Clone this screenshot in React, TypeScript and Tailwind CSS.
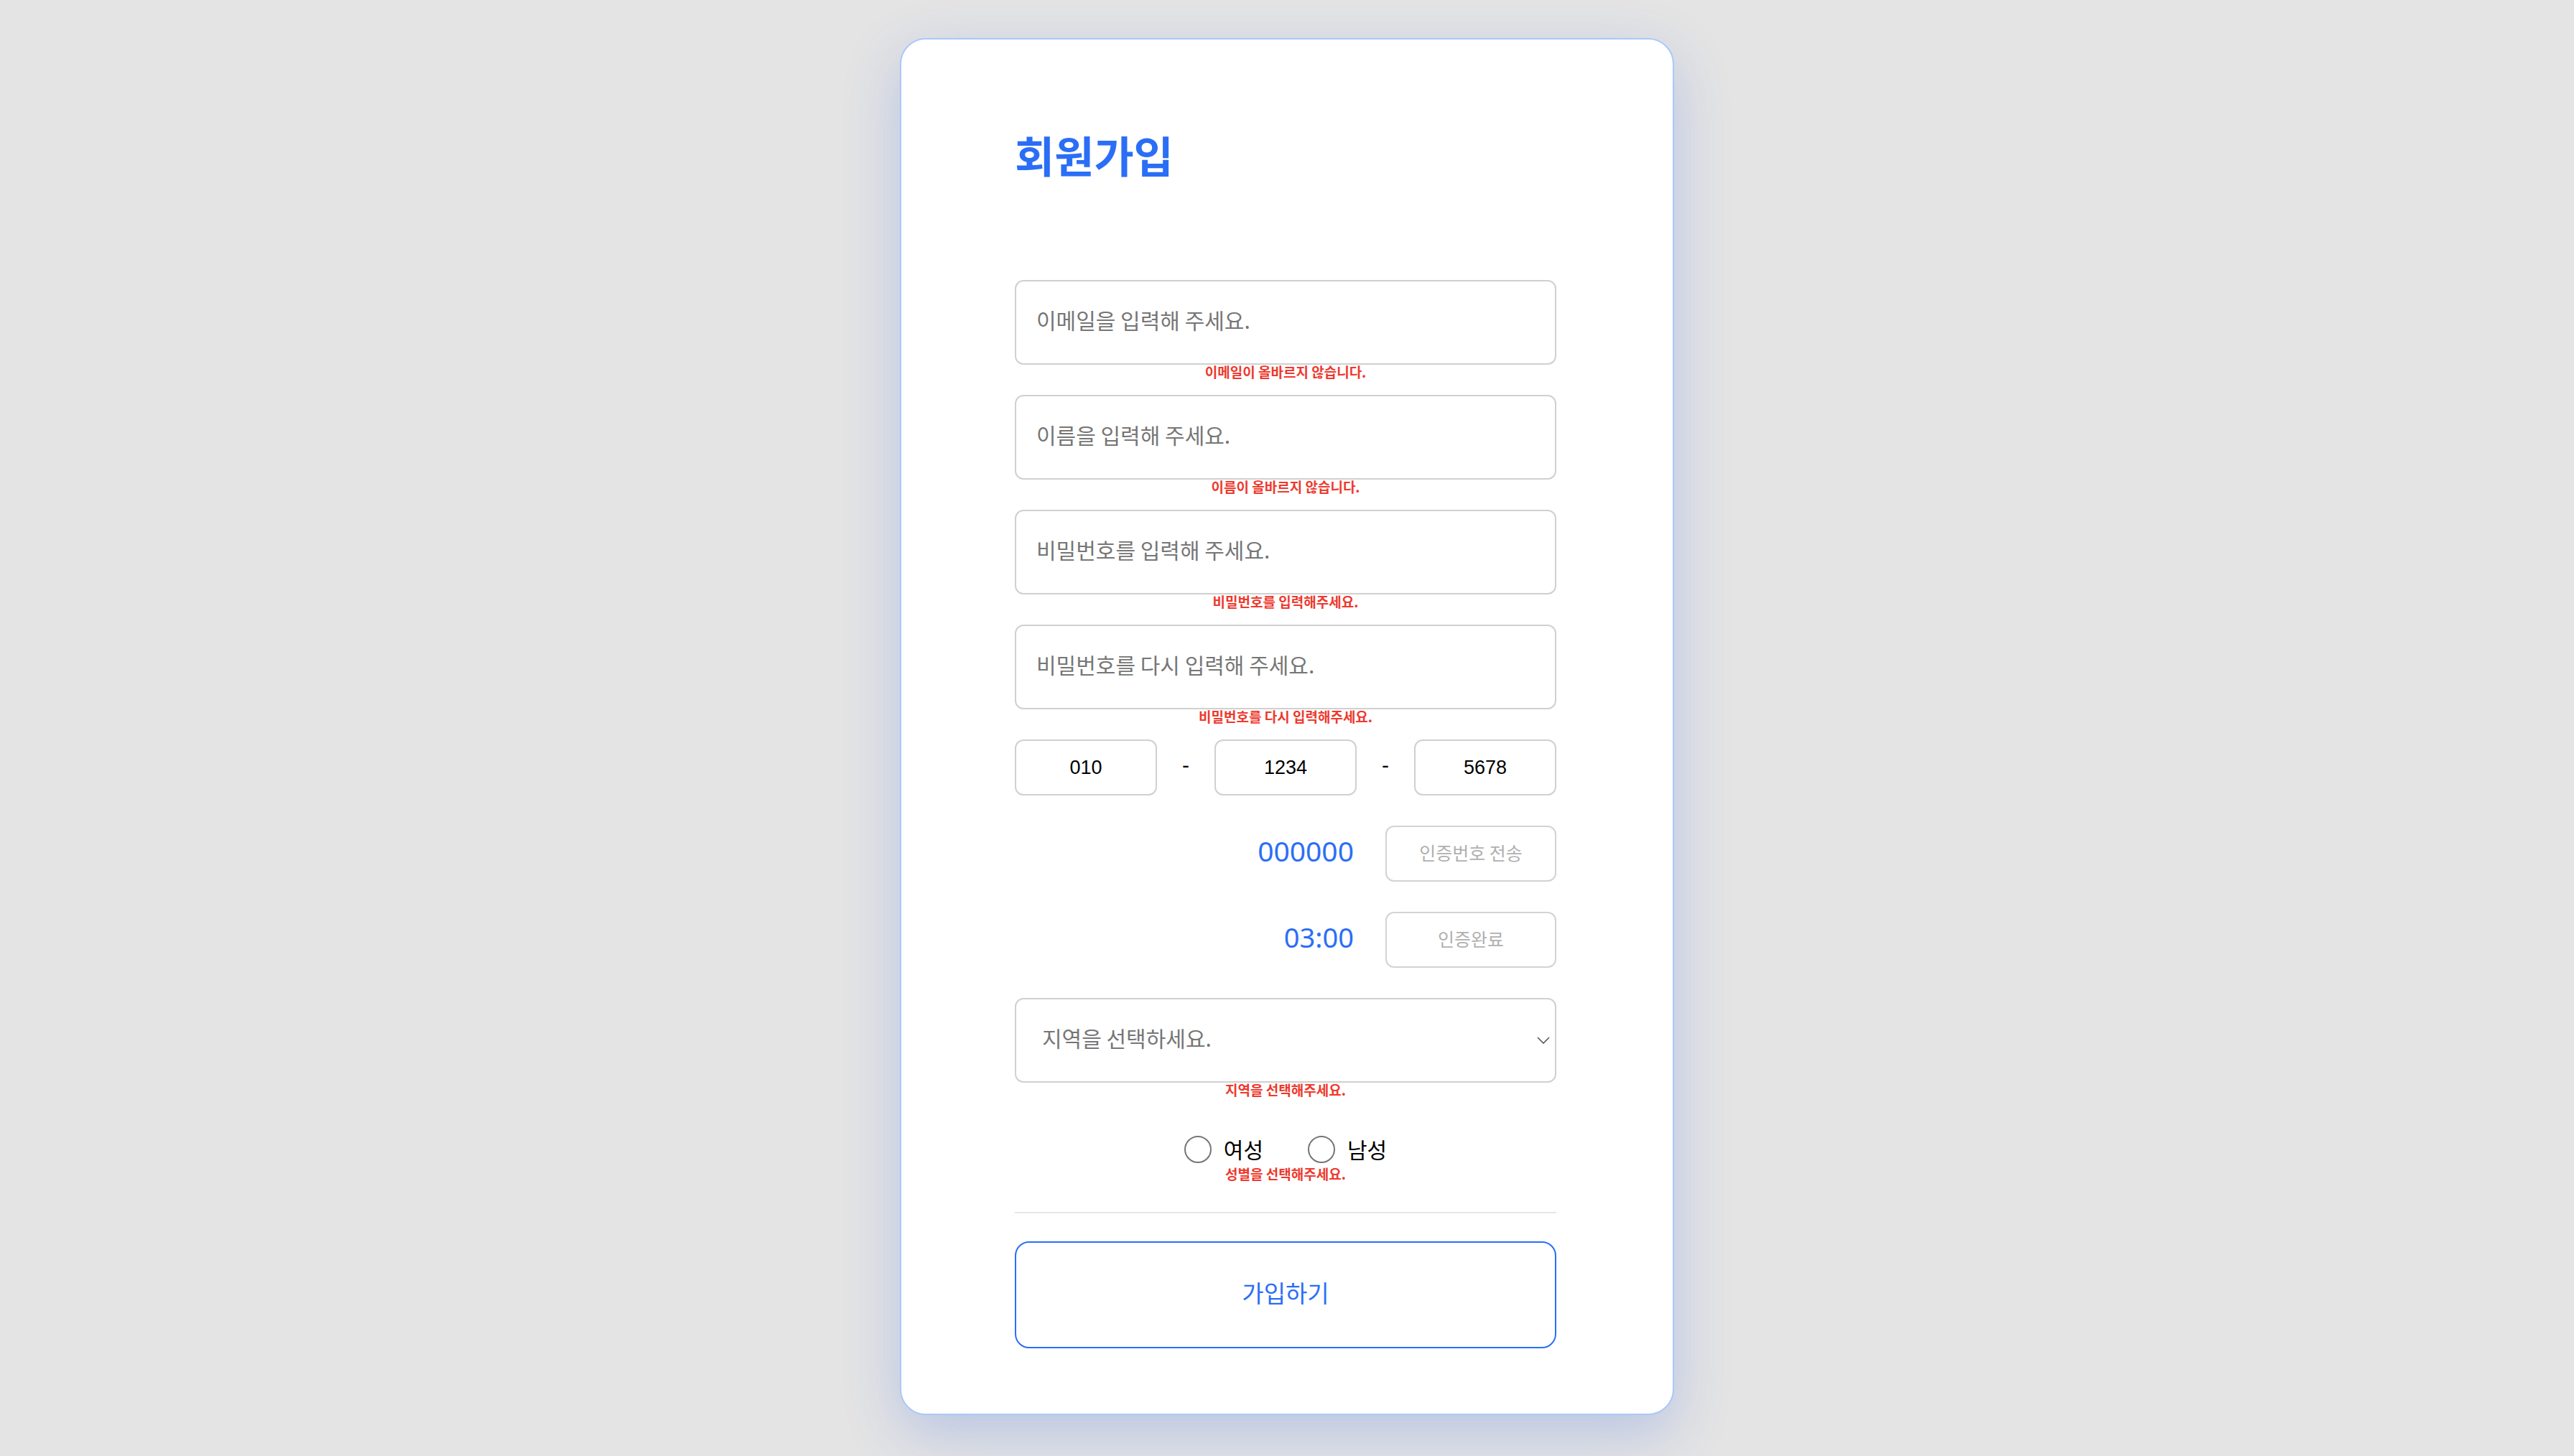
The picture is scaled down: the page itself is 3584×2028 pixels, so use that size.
import { useState } from 'react';

const KR = "font-['Noto_Sans_CJK_KR',sans-serif]";

function ErrorText({ children }: { children: string }) {
  return (
    <p className="flex h-[20px] items-center justify-center text-[19px] leading-[20px] font-bold text-[#ee392e]">
      {children}
    </p>
  );
}

function TextField({ placeholder, error, type = 'text' }: { placeholder: string; error: string; type?: string }) {
  return (
    <div>
      <input
        type={type}
        placeholder={placeholder}
        className="block h-[118px] w-full rounded-[12px] border-2 border-[#d0d0d0] bg-white pb-[8px] pl-[28px] text-[30px] text-black outline-none placeholder:text-[#767676]"
      />
      <ErrorText>{error}</ErrorText>
    </div>
  );
}

export default function App() {
  const [gender, setGender] = useState('');

  return (
    <div className={`flex min-h-screen justify-center bg-[#e4e4e4] pt-[53px] ${KR}`}>
      <div className="h-[1918px] w-[1078px] rounded-[36px] border-2 border-[#aac8fa] bg-white pt-[130px] pr-[162px] pl-[158px] shadow-[0_26px_80px_rgba(45,95,225,0.24)]">
        <h1 className="flex h-[64px] items-center pb-[4px] text-[60px] font-bold text-[#2b6ef6]">회원가입</h1>

        <div className="mt-[141px] flex flex-col gap-[22px]">
          <TextField placeholder="이메일을 입력해 주세요." error="이메일이 올바르지 않습니다." />
          <TextField placeholder="이름을 입력해 주세요." error="이름이 올바르지 않습니다." />
          <TextField type="password" placeholder="비밀번호를 입력해 주세요." error="비밀번호를 입력해주세요." />
          <TextField type="password" placeholder="비밀번호를 다시 입력해 주세요." error="비밀번호를 다시 입력해주세요." />

          {/* phone number */}
          <div className="flex h-[78px] items-center">
            {['010', '1234', '5678'].map((v, i) => (
              <div key={v} className="flex items-center">
                {i > 0 && (
                  <span className="flex w-[80px] justify-center pb-[8px] font-['Liberation_Sans',sans-serif] text-[30px] text-black">-</span>
                )}
                <input
                  defaultValue={v}
                  className="h-[78px] w-[198px] rounded-[12px] border-2 border-[#d0d0d0] bg-white text-center font-['Liberation_Sans',sans-serif] text-[27px] text-black outline-none"
                />
              </div>
            ))}
          </div>
        </div>

        <div className="mt-[42px] flex flex-col gap-[42px]">
          <div className="flex h-[78px] items-center justify-end gap-[44px]">
            <span className="mb-[8px] font-['Noto_Sans',sans-serif] text-[39px] text-[#2b6ef6]">000000</span>
            <button className="h-[78px] w-[238px] rounded-[12px] border-2 border-[#d3d3d3] bg-white pb-[3px] text-[25px] text-[#b0b0b0]">
              인증번호 전송
            </button>
          </div>
          <div className="flex h-[78px] items-center justify-end gap-[44px]">
            <span className="mb-[8px] font-['Noto_Sans',sans-serif] text-[38px] text-[#2b6ef6]">03:00</span>
            <button className="h-[78px] w-[238px] rounded-[12px] border-2 border-[#d3d3d3] bg-white pb-[3px] text-[25px] text-[#b0b0b0]">
              인증완료
            </button>
          </div>
        </div>

        <div className="mt-[42px]">
          <div className="relative">
            <select
              defaultValue=""
              className="block h-[118px] w-full appearance-none rounded-[12px] border-2 border-[#d0d0d0] bg-white pb-[8px] pl-[36px] text-[30px] text-[#767676] outline-none"
            >
              <option value="" disabled>
                지역을 선택하세요.
              </option>
              <option value="seoul">서울</option>
              <option value="busan">부산</option>
            </select>
            <svg
              className="pointer-events-none absolute top-[54px] right-[9px] h-[10px] w-[18px]"
              viewBox="0 0 18 10"
              fill="none"
              stroke="#555"
              strokeWidth="1.6"
            >
              <polyline points="1,1 9,9 17,1" />
            </svg>
          </div>
          <ErrorText>지역을 선택해주세요.</ErrorText>
        </div>

        <div className="mt-[53px] flex h-[40px] items-center justify-center">
          {['여성', '남성'].map((g, i) => (
            <label key={g} className={`flex cursor-pointer items-center gap-[17px] ${i > 0 ? 'ml-[62px]' : ''}`}>
              <input
                type="radio"
                name="gender"
                checked={gender === g}
                onChange={() => setGender(g)}
                className="h-[38px] w-[38px] appearance-none rounded-full border-2 border-[#767676] bg-white checked:border-[12px] checked:border-[#2b6ef6]"
              />
              <span className="pb-[2px] text-[30px] text-black">{g}</span>
            </label>
          ))}
        </div>
        <div className="mt-[4px]">
          <ErrorText>성별을 선택해주세요.</ErrorText>
        </div>

        <div className="mt-[43px] h-[2px] bg-[#e6e6e6]" />

        <button className="mt-[39px] flex h-[149px] w-full items-center justify-center rounded-[20px] border-2 border-[#2b6ef6] bg-white pb-[6px] text-[33px] text-[#2b6ef6]">
          가입하기
        </button>
      </div>
    </div>
  );
}
